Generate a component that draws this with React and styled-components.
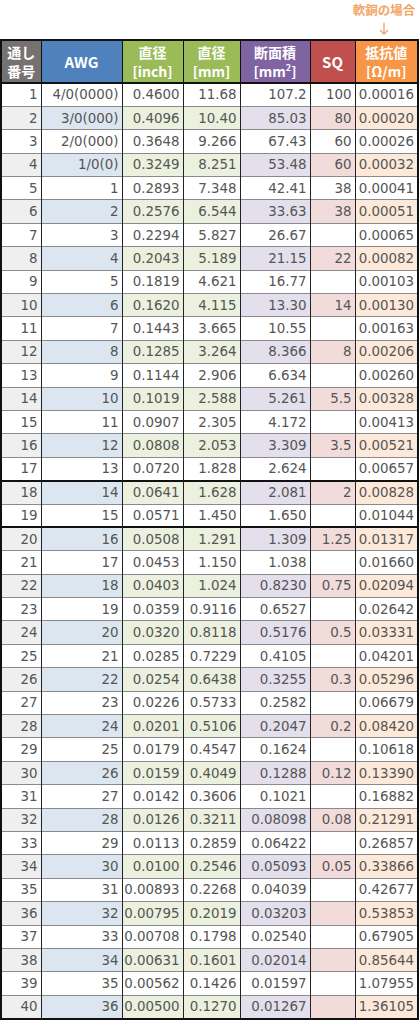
import React from 'react';
import styled, { createGlobalStyle } from 'styled-components';

const GlobalStyle = createGlobalStyle`
    body {
        margin: 0;
        background: #fff;
        font-family: "DejaVu Sans", "Noto Sans CJK JP", sans-serif;
    }
`;

const Page = styled.div`
    width: 420px;
`;

const Note = styled.div`
    display: flex;
    flex-direction: column;
    align-items: center;
    gap: 4px;
    width: 66px;
    margin-left: 351px;
    height: 39px;
    color: #f4a566;
    font-family: "Noto Sans CJK JP", sans-serif;
    font-weight: 700;
    font-size: 12.5px;
    line-height: 16px;
    padding-top: 2px;
    box-sizing: border-box;
`;

const Table = styled.table`
    border-collapse: collapse;
    table-layout: fixed;
    width: 417px;
    border: 2px solid #111;
`;

const Head = styled.th`
    background: ${p => p.bg};
    color: #fff;
    font-family: "Noto Sans CJK JP", sans-serif;
    font-weight: 700;
    font-size: ${p => p.big ? '15px' : '14px'};
    line-height: 19px;
    height: 41px;
    padding: 0;
    border-left: 1px solid #111;
    border-bottom: 2px solid #111;
    text-align: center;
    white-space: nowrap;

    sup {
        font-size: 9px;
        line-height: 0;
    }
`;

const Row = styled.tr`
    height: 23.4px;
    border-top: ${p => p.thick ? '2px solid #111' : '1px solid #8a8a8a'};
`;

const Cell = styled.td`
    background: ${p => p.shade || '#fff'};
    color: #555;
    font-size: 13.4px;
    text-align: right;
    padding: 0 3px 0 0;
    border-left: 1px solid #222;
    white-space: nowrap;
    overflow: hidden;
`;

const cols = [
    { w: 40, head: ['通し', '番号'], bg: '#777272', shade: '#efefef' },
    { w: 81, head: ['AWG'], bg: '#4f81bd', shade: '#dce6f1', big: true },
    { w: 61, head: ['直径', '[inch]'], bg: '#9bbb59', shade: '#ebf1de' },
    { w: 57, head: ['直径', '[mm]'], bg: '#9bbb59', shade: '#ebf1de' },
    { w: 70, head: ['断面積', 'mm2'], bg: '#8064a2', shade: '#e4dfec' },
    { w: 45, head: ['SQ'], bg: '#c0504d', shade: '#f2dcdb', big: true },
    { w: 63, head: ['抵抗値', '[Ω/m]'], bg: '#f79646', shade: '#fde9d9' },
];

const rows = [
    ['4/0(0000)', '0.4600', '11.68', '107.2', '100', '0.00016'],
    ['3/0(000)', '0.4096', '10.40', '85.03', '80', '0.00020'],
    ['2/0(000)', '0.3648', '9.266', '67.43', '60', '0.00026'],
    ['1/0(0)', '0.3249', '8.251', '53.48', '60', '0.00032'],
    ['1', '0.2893', '7.348', '42.41', '38', '0.00041'],
    ['2', '0.2576', '6.544', '33.63', '38', '0.00051'],
    ['3', '0.2294', '5.827', '26.67', '', '0.00065'],
    ['4', '0.2043', '5.189', '21.15', '22', '0.00082'],
    ['5', '0.1819', '4.621', '16.77', '', '0.00103'],
    ['6', '0.1620', '4.115', '13.30', '14', '0.00130'],
    ['7', '0.1443', '3.665', '10.55', '', '0.00163'],
    ['8', '0.1285', '3.264', '8.366', '8', '0.00206'],
    ['9', '0.1144', '2.906', '6.634', '', '0.00260'],
    ['10', '0.1019', '2.588', '5.261', '5.5', '0.00328'],
    ['11', '0.0907', '2.305', '4.172', '', '0.00413'],
    ['12', '0.0808', '2.053', '3.309', '3.5', '0.00521'],
    ['13', '0.0720', '1.828', '2.624', '', '0.00657'],
    ['14', '0.0641', '1.628', '2.081', '2', '0.00828'],
    ['15', '0.0571', '1.450', '1.650', '', '0.01044'],
    ['16', '0.0508', '1.291', '1.309', '1.25', '0.01317'],
    ['17', '0.0453', '1.150', '1.038', '', '0.01660'],
    ['18', '0.0403', '1.024', '0.8230', '0.75', '0.02094'],
    ['19', '0.0359', '0.9116', '0.6527', '', '0.02642'],
    ['20', '0.0320', '0.8118', '0.5176', '0.5', '0.03331'],
    ['21', '0.0285', '0.7229', '0.4105', '', '0.04201'],
    ['22', '0.0254', '0.6438', '0.3255', '0.3', '0.05296'],
    ['23', '0.0226', '0.5733', '0.2582', '', '0.06679'],
    ['24', '0.0201', '0.5106', '0.2047', '0.2', '0.08420'],
    ['25', '0.0179', '0.4547', '0.1624', '', '0.10618'],
    ['26', '0.0159', '0.4049', '0.1288', '0.12', '0.13390'],
    ['27', '0.0142', '0.3606', '0.1021', '', '0.16882'],
    ['28', '0.0126', '0.3211', '0.08098', '0.08', '0.21291'],
    ['29', '0.0113', '0.2859', '0.06422', '', '0.26857'],
    ['30', '0.0100', '0.2546', '0.05093', '0.05', '0.33866'],
    ['31', '0.00893', '0.2268', '0.04039', '', '0.42677'],
    ['32', '0.00795', '0.2019', '0.03203', '', '0.53853'],
    ['33', '0.00708', '0.1798', '0.02540', '', '0.67905'],
    ['34', '0.00631', '0.1601', '0.02014', '', '0.85644'],
    ['35', '0.00562', '0.1426', '0.01597', '', '1.07955'],
    ['36', '0.00500', '0.1270', '0.01267', '', '1.36105'],
];

// thick rules above these row numbers
const thickAbove = [18, 20];

const DownArrow = () => (
    <svg width="10" height="13" viewBox="0 0 10 13">
        <path d="M5 0.5 V12 M1 8 L5 12 L9 8" fill="none" stroke="#eaa578" strokeWidth="1.3" />
    </svg>
);

export default function App() {
    return (
        <Page>
            <GlobalStyle />
            <Note>
                軟銅の場合
                <DownArrow />
            </Note>
            <Table>
                <colgroup>
                    {cols.map((c, i) => <col key={i} style={{ width: c.w }} />)}
                </colgroup>
                <thead>
                    <tr>
                        {cols.map((c, i) => (
                            <Head key={i} bg={c.bg} big={c.big}>
                                {c.head[0]}
                                {c.head[1] === 'mm2'
                                    ? <><br />[mm<sup>2</sup>]</>
                                    : c.head[1] && <><br />{c.head[1]}</>}
                            </Head>
                        ))}
                    </tr>
                </thead>
                <tbody>
                    {rows.map((r, i) => {
                        const n = i + 1;
                        const even = n % 2 === 0;
                        return (
                            <Row key={n} thick={thickAbove.includes(n)}>
                                {[String(n), ...r].map((v, j) => (
                                    <Cell key={j} shade={even ? cols[j].shade : null}>{v}</Cell>
                                ))}
                            </Row>
                        );
                    })}
                </tbody>
            </Table>
        </Page>
    );
}
